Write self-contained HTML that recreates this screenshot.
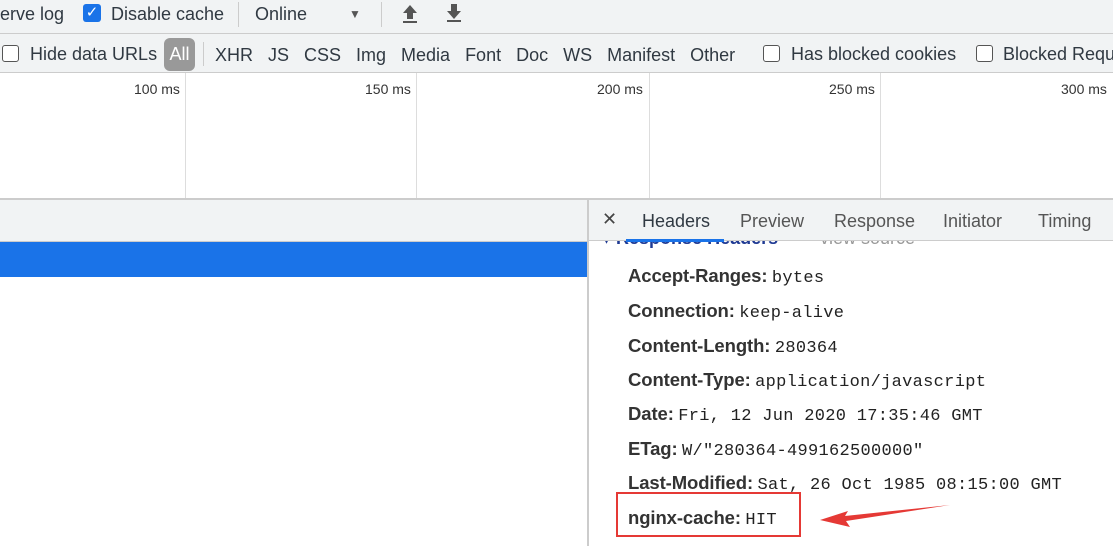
<!DOCTYPE html>
<html><head><style>
body{margin:0;width:1113px;height:546px;overflow:hidden;background:#fff;font-family:"Liberation Sans","DejaVu Sans",sans-serif;color:#333;position:relative}
.a{position:absolute;white-space:nowrap}
.t{font-size:18px;color:#303942}
.cb{position:absolute;width:15px;height:15px;border:1.5px solid #555;border-radius:3px;background:#fff}
.k{font-weight:bold;font-size:18.5px;color:#333;letter-spacing:-0.1px}
.v{font-family:"Liberation Mono",monospace;font-size:17px;color:#222;letter-spacing:0.3px}
</style></head><body>
<div class="a" style="left:0;top:0;width:1113px;height:33px;background:#f1f3f4;border-bottom:1px solid #ccc"></div>
<div class="a t" style="left:0;top:4px">erve log</div>
<div class="a" style="left:83px;top:4px;width:18px;height:18px;background:#1a73e8;border-radius:3px;color:#fff;font-size:15px;text-align:center;line-height:18px">✓</div>
<div class="a t" style="left:111px;top:4px">Disable cache</div>
<div class="a" style="left:238px;top:2px;width:1px;height:25px;background:#ccc"></div>
<div class="a t" style="left:255px;top:4px">Online</div>
<div class="a" style="left:349px;top:7px;font-size:12px;color:#555">▼</div>
<div class="a" style="left:381px;top:2px;width:1px;height:25px;background:#ccc"></div>
<svg class="a" style="left:400px;top:3px" width="20" height="20"><path d="M10 2 L17 10 H13 V16 H7 V10 H3 Z" fill="#555"/><rect x="3" y="18" width="14" height="2" fill="#555"/></svg>
<svg class="a" style="left:444px;top:3px" width="20" height="20"><path d="M7 1 H13 V8 H17 L10 16 L3 8 H7 Z" fill="#555"/><rect x="3" y="17" width="14" height="2" fill="#555"/></svg>
<div class="a" style="left:0;top:34px;width:1113px;height:38px;background:#f1f3f4;border-bottom:1px solid #ccc"></div>
<div class="cb" style="left:2px;top:45px"></div>
<div class="a t" style="left:30px;top:44px">Hide data URLs</div>
<div class="a" style="left:164px;top:38px;width:31px;height:33px;background:#999;border-radius:6px;color:#fff;font-size:18px;text-align:center;line-height:33px">All</div>
<div class="a" style="left:203px;top:42px;width:1px;height:24px;background:#ccc"></div>
<div class="a t" style="left:215px;top:45px">XHR&nbsp;&nbsp; JS&nbsp;&nbsp; CSS&nbsp;&nbsp; Img&nbsp;&nbsp; Media&nbsp;&nbsp; Font&nbsp;&nbsp; Doc&nbsp;&nbsp; WS&nbsp;&nbsp; Manifest&nbsp;&nbsp; Other</div>
<div class="cb" style="left:763px;top:45px"></div>
<div class="a t" style="left:791px;top:44px">Has blocked cookies</div>
<div class="cb" style="left:976px;top:45px"></div>
<div class="a t" style="left:1003px;top:44px">Blocked Requ</div>
<div class="a" style="left:185px;top:73px;width:1px;height:126px;background:#ddd"></div>
<div class="a" style="left:416px;top:73px;width:1px;height:126px;background:#ddd"></div>
<div class="a" style="left:649px;top:73px;width:1px;height:126px;background:#ddd"></div>
<div class="a" style="left:880px;top:73px;width:1px;height:126px;background:#ddd"></div>
<div class="a" style="left:134px;top:81px;font-size:14px;color:#333">100 ms</div>
<div class="a" style="left:365px;top:81px;font-size:14px;color:#333">150 ms</div>
<div class="a" style="left:597px;top:81px;font-size:14px;color:#333">200 ms</div>
<div class="a" style="left:829px;top:81px;font-size:14px;color:#333">250 ms</div>
<div class="a" style="left:1061px;top:81px;font-size:14px;color:#333">300 ms</div>
<div class="a" style="left:0;top:198px;width:1113px;height:2px;background:#ccc"></div>
<div class="a" style="left:0;top:200px;width:587px;height:41px;background:#f1f3f4;border-bottom:1px solid #ccc"></div>
<div class="a" style="left:0;top:242px;width:587px;height:35px;background:#1a73e8"></div>
<div class="a" style="left:587px;top:200px;width:2px;height:346px;background:#ccc"></div>
<div class="a" style="left:602px;top:228px;font-size:18px;font-weight:bold;color:#1f3a93">▾ Response Headers</div>
<div class="a" style="left:820px;top:228px;font-size:18px;color:#999">view source</div>
<div class="a" style="left:589px;top:200px;width:524px;height:40px;background:#f1f3f4;border-bottom:1px solid #ccc"></div>
<div class="a" style="left:602px;top:209px;font-size:18px;color:#444">✕</div>
<div class="a t" style="left:642px;top:211px">Headers</div>
<div class="a" style="left:626px;top:239px;width:98px;height:3px;background:#1a73e8"></div>
<div class="a t" style="left:740px;top:211px;color:#555">Preview</div>
<div class="a t" style="left:834px;top:211px;color:#555">Response</div>
<div class="a t" style="left:943px;top:211px;color:#555">Initiator</div>
<div class="a t" style="left:1038px;top:211px;color:#555">Timing</div>
<div class="a" style="left:628px;top:265px"><span class="k">Accept-Ranges:</span> <span class="v">bytes</span></div>
<div class="a" style="left:628px;top:300px"><span class="k">Connection:</span> <span class="v">keep-alive</span></div>
<div class="a" style="left:628px;top:335px"><span class="k">Content-Length:</span> <span class="v">280364</span></div>
<div class="a" style="left:628px;top:369px"><span class="k">Content-Type:</span> <span class="v">application/javascript</span></div>
<div class="a" style="left:628px;top:403px"><span class="k">Date:</span> <span class="v">Fri, 12 Jun 2020 17:35:46 GMT</span></div>
<div class="a" style="left:628px;top:438px"><span class="k">ETag:</span> <span class="v">W/"280364-499162500000"</span></div>
<div class="a" style="left:628px;top:472px"><span class="k">Last-Modified:</span> <span class="v">Sat, 26 Oct 1985 08:15:00 GMT</span></div>
<div class="a" style="left:628px;top:507px"><span class="k">nginx-cache:</span> <span class="v">HIT</span></div>
<div class="a" style="left:616px;top:492px;width:181px;height:41px;border:2px solid #e53935"></div>
<svg class="a" style="left:818px;top:500px" width="135" height="30"><path d="M2 20 L30 11 L27 16 L132 5 L28 21 L32 27 Z" fill="#e53935"/></svg>
</body></html>
